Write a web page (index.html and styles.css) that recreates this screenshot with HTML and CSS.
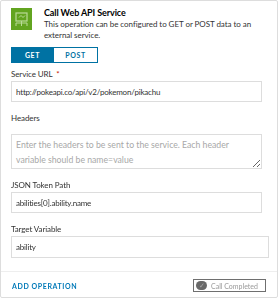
FILE: index.html
```html
<!DOCTYPE html>
<html lang="en">
<head>
  <meta charset="UTF-8" />
  <title>Call Web API Service</title>
  <link rel="stylesheet" href="styles.css">
</head>
<body>
  <div class="card">
    <div class="card-body">
      <div class="head">
        <div class="op-icon">
          <svg width="21" height="22" viewBox="0 0 21 22">
            <rect width="21" height="22" fill="#62a420"/>
            <rect x="5" y="5" width="11" height="8" fill="none" stroke="#b9da98" stroke-width="1.2"/>
            <path d="M8 9.5l2-2 2 2 2-2" fill="none" stroke="#b9da98" stroke-width="1"/>
            <path d="M10.5 13v2M5 15h11M5 15v3M16 15v3M10.5 15v3" fill="none" stroke="#b9da98" stroke-width="1"/>
          </svg>
        </div>
        <div class="head-text">
          <div class="title">Call Web API Service</div>
          <div class="desc">This operation can be configured to GET or POST data to an external service.</div>
        </div>
      </div>

      <div class="seg">
        <button class="seg-btn active">GET</button>
        <button class="seg-btn">POST</button>
      </div>

      <label class="lbl">Service URL <span class="req">*</span></label>
      <input class="field" type="text" value="http://pokeapi.co/api/v2/pokemon/pikachu" />

      <label class="lbl lbl-headers">Headers</label>
      <textarea class="field area" placeholder="Enter the headers to be sent to the service. Each header variable should be name=value"></textarea>

      <label class="lbl">JSON Token Path</label>
      <input class="field" type="text" value="abilities[0].ability.name" />

      <label class="lbl">Target Variable</label>
      <input class="field wide" type="text" value="ability" />
    </div>
    <div class="card-footer">
      <a class="add-op" href="#">ADD OPERATION</a>
      <div class="done-toggle">
        <span class="knob">&#10003;</span>
        <span class="done-text">Call Completed</span>
      </div>
    </div>
  </div>
</body>
</html>
```

FILE: styles.css
```css
/* Base */
:root {
  --blue: #0072a3;
  --link: #0079b8;
  --border: #dddddd;
  --text: #333333;
  --font: 'Lato', 'Liberation Sans', sans-serif;
}
body {
  margin: 0;
  background: #ffffff;
  font-family: var(--font);
  color: var(--text);
}
/* Card */
.card {
  width: 278px;
  height: 298px;
  box-sizing: border-box;
  border: 1px solid var(--border);
  border-radius: 2px;
  display: flex;
  flex-direction: column;
}
.card-body {
  padding: 5px 10px 0 10px;
  display: flex;
  flex-direction: column;
  align-items: flex-start;
}
/* Header */
.head {
  display: flex;
  gap: 12px;
}
.op-icon {
  margin-top: 2px;
  width: 21px;
  height: 22px;
  flex: none;
}
.op-icon svg {
  display: block;
}
.title {
  font-size: 9px;
  font-weight: 700;
  line-height: 13px;
  letter-spacing: -0.1px;
  color: #000;
}
.desc {
  font-size: 8px;
  line-height: 11px;
  letter-spacing: -0.05px;
  color: #333;
}
/* Segmented GET / POST */
.seg {
  display: flex;
  margin-top: 6px;
  height: 16px;
}
.seg-btn {
  width: 43px;
  height: 16px;
  padding: 0;
  border: 1px solid var(--blue);
  background: #fff;
  color: var(--blue);
  font-family: var(--font);
  font-size: 7px;
  font-weight: 700;
  letter-spacing: 0.6px;
}
.seg-btn + .seg-btn {
  border-left: none;
  width: 44px;
}
.seg-btn.active {
  background: var(--blue);
  color: #fff;
}
/* Form */
.lbl {
  margin-top: 6px;
  font-size: 8px;
  line-height: 11px;
  letter-spacing: -0.1px;
  color: #333;
}
.lbl-headers,
.lbl + .field + .lbl {
  margin-top: 11px;
}
.req {
  color: #c92100;
  margin-left: 2px;
}
.field {
  margin-top: 1px;
  width: 251px;
  height: 21px;
  box-sizing: border-box;
  border: 1px solid var(--border);
  border-radius: 0;
  padding: 0 4px;
  font-family: var(--font);
  font-size: 8px;
  letter-spacing: -0.2px;
  color: #333;
  outline: none;
}
.area {
  margin-top: 10px;
  height: 35px;
  padding: 2px 4px;
  font-size: 8.7px;
  letter-spacing: 0;
  line-height: 15px;
  resize: vertical;
}
.area::placeholder {
  color: #a8a8a8;
}
.area + .lbl {
  margin-top: 10px;
}
.wide {
  width: 258px;
  height: 22px;
}
/* Footer */
.card-footer {
  margin-top: 13px;
  flex: 1;
  border-top: 1px solid #eeeeee;
  display: flex;
  align-items: center;
  justify-content: space-between;
  padding: 2px 11px 0 11px;
}
.add-op {
  color: var(--link);
  text-decoration: none;
  font-size: 7px;
  font-weight: 700;
  letter-spacing: 0.6px;
}
.done-toggle {
  width: 73px;
  height: 13px;
  box-sizing: border-box;
  border: 1px solid #6f6f6f;
  display: flex;
  align-items: center;
  gap: 4px;
  padding-left: 2px;
}
.knob {
  width: 11px;
  height: 9px;
  border-radius: 5px;
  background: #6a6a6a;
  color: #aaaaaa;
  font-size: 7px;
  line-height: 9px;
  text-align: center;
}
.done-text {
  font-size: 7px;
  color: #9a9a9a;
  white-space: nowrap;
}
```
